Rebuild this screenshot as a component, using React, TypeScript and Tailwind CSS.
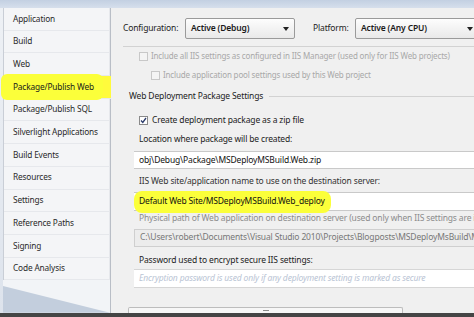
import React from 'react';

const tabs = [
  'Application',
  'Build',
  'Web',
  'Package/Publish Web',
  'Package/Publish SQL',
  'Silverlight Applications',
  'Build Events',
  'Resources',
  'Settings',
  'Reference Paths',
  'Signing',
  'Code Analysis',
];

const font = { fontFamily: '"Noto Sans", "Open Sans", sans-serif' };

function Checkbox({ checked, disabled }: { checked?: boolean; disabled?: boolean }) {
  return (
    <span
      className={`inline-flex items-center justify-center w-[9px] h-[9px] border shrink-0 ${
        disabled ? 'border-[#c8c8c8] bg-[#f4f4f4]' : 'border-[#8a8a8a] bg-white'
      }`}
    >
      {checked && (
        <svg width="7" height="7" viewBox="0 0 7 7">
          <path d="M1 3.5 L2.8 5.5 L6 1" stroke="#2a3a6a" strokeWidth="1.3" fill="none" />
        </svg>
      )}
    </span>
  );
}

function Dropdown({ value, width }: { value: string; width: string }) {
  return (
    <div
      className={`${width} h-[21px] flex items-center justify-between pl-[5px] pr-[5px] border border-[#9a9a9a] rounded-[2px] bg-gradient-to-b from-[#fdfdfd] to-[#e9e9e9] text-[#1a1a1a]`}
    >
      <span className="text-[8.5px] font-semibold">{value}</span>
      <svg width="6" height="4" viewBox="0 0 6 4">
        <path d="M0 0 L6 0 L3 4 Z" fill="#222" />
      </svg>
    </div>
  );
}

export default function App() {
  return (
    <div className="w-[474px] h-[317px] flex bg-[#3e3e3e] overflow-hidden tracking-[-0.15px]" style={font}>
      <div className="flex-1 flex flex-col">
        <div className="h-[8px] bg-gradient-to-b from-[#c3d0e2] to-[#d6dfec]" />
        <div className="flex-1 flex bg-[#dfe5ee]">
          {/* left tabs */}
          <div className="w-[110px] flex flex-col pl-[3px] bg-gradient-to-b from-[#eef1f5] to-[#dde3ec]">
            <div className="flex flex-col border-l border-[#c9ced6]">
              {tabs.map((t) => {
                const sel = t === 'Package/Publish Web';
                return (
                  <div
                    key={t}
                    className={`relative h-[22.7px] flex items-center pl-[9px] text-[8.3px] ${
                      sel
                        ? 'bg-[#fffb3c] text-[#1a1a1a] -mr-px z-10'
                        : 'bg-[#f4f5f7] border-r border-[#c5cbd4] text-[#2a2a2a]'
                    } border-b border-[#e6e8ec]`}
                  >
                    {sel && (
                      <span className="absolute left-[-3px] right-[8px] top-[-2px] bottom-[-2px] bg-[#fbff3a] rounded-[6px] -z-10" />
                    )}
                    {t}
                  </div>
                );
              })}
            </div>
            <div className="flex-1 relative">
              <svg className="absolute inset-0 w-full h-full" viewBox="0 0 107 33" preserveAspectRatio="none">
                <polygon points="0,0 107,0 107,33 0,33" fill="#f2f4f7" />
                <polygon points="0,6 107,33 0,33" fill="#c3cedd" />
              </svg>
            </div>
          </div>

          {/* content panel */}
          <div className="flex-1 flex flex-col bg-[#f0f0f0] border-l border-[#b9bec6] border-r border-r-[#d8d8d8] pl-[12px] pr-[2px] pt-[10px]">
            <div className="flex items-center h-[21px] text-[8.5px] text-[#222]">
              <span className="w-[62px]">Configuration:</span>
              <Dropdown value="Active (Debug)" width="w-[110px]" />
              <span className="ml-[18px] w-[42px]">Platform:</span>
              <Dropdown value="Active (Any CPU)" width="flex-1" />
            </div>
            <div className="mt-[7px] border-t border-[#d2d2d2]" />
            <div className="mt-[3px] ml-[16px] flex items-center gap-[3px] text-[8px] text-[#a8a8a8] whitespace-nowrap">
              <Checkbox disabled />
              <span>Include all IIS settings as configured in IIS Manager (used only for IIS Web projects)</span>
            </div>
            <div className="mt-[7px] ml-[28px] flex items-center gap-[3px] text-[8px] text-[#a8a8a8] whitespace-nowrap">
              <Checkbox disabled />
              <span>Include application pool settings used by this Web project</span>
            </div>
            <div className="mt-[9px] ml-[6px] flex items-center gap-[6px] text-[8.5px] text-[#222]">
              <span className="whitespace-nowrap">Web Deployment Package Settings</span>
              <div className="flex-1 border-t border-[#d2d2d2]" />
            </div>
            <div className="mt-[11px] ml-[16px] flex items-center gap-[4px] text-[8.5px] text-[#222] whitespace-nowrap">
              <Checkbox checked />
              <span>Create deployment package as a zip file</span>
            </div>
            <div className="mt-[6px] ml-[16px] text-[8.5px] text-[#222] whitespace-nowrap">
              Location where package will be created:
            </div>
            <div className="mt-[6px] ml-[11px] h-[18px] flex items-center pl-[5px] bg-white border-y border-[#c9c9c9] text-[8.5px] text-[#111] whitespace-nowrap overflow-hidden">
              obj\Debug\Package\MSDeployMSBuild.Web.zip
            </div>
            <div className="mt-[6px] ml-[16px] text-[8.5px] text-[#333] whitespace-nowrap overflow-hidden">
              IIS Web site/application name to use on the destination server:
            </div>
            <div className="mt-[4px] ml-[11px] h-[19px] flex items-center bg-white border-y border-[#c9c9c9] text-[8.5px] text-[#111] whitespace-nowrap">
              <span className="h-[22px] -my-[2px] flex items-center pl-[5px] pr-[6px] bg-[#fbff3a] rounded-[8px]">
                Default Web Site/MSDeployMSBuild.Web_deploy
              </span>
            </div>
            <div className="mt-[1px] ml-[16px] text-[8.5px] text-[#8c8c8c] whitespace-nowrap overflow-hidden">
              Physical path of Web application on destination server (used only when IIS settings are i
            </div>
            <div className="mt-[4px] ml-[11px] h-[18px] flex items-center pl-[5px] bg-[#ececec] border border-r-0 border-[#cfcfcf] text-[8.5px] text-[#777] whitespace-nowrap overflow-hidden">
              C:\Users\robert\Documents\Visual Studio 2010\Projects\Blogposts\MSDeployMsBuild\M
            </div>
            <div className="mt-[7px] ml-[16px] text-[8.5px] text-[#222] whitespace-nowrap overflow-hidden">
              Password used to encrypt secure IIS settings:
            </div>
            <div className="mt-[2px] ml-[11px] h-[19px] flex items-center pl-[5px] bg-white border-y border-[#d6d6d6] text-[8.5px] italic text-[#b9c4d4] whitespace-nowrap overflow-hidden">
              Encryption password is used only if any deployment setting is marked as secure
            </div>
            <div className="flex-1 flex items-end">
              <div className="ml-[5px] w-[275px] h-[6px] border border-b-0 border-[#bdbdbd] rounded-t-[2px] bg-[#f7f7f7] flex justify-center">
                <span className="w-[6px] border-t border-[#8a8a8a] mt-[2px]" />
              </div>
            </div>
          </div>
        </div>
        <div className="h-[4px] bg-[#454545]" />
      </div>
      <div className="w-[4px] bg-[#3a3a3a]" />
    </div>
  );
}
